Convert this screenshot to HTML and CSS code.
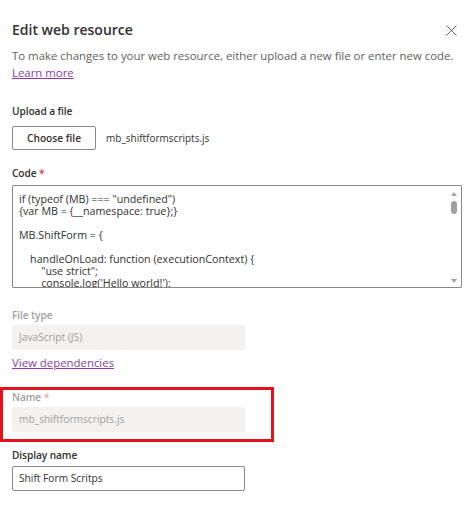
FILE: index.html
```html
<!DOCTYPE html>
<html lang="en">
<head>
  <meta charset="UTF-8" />
  <meta name="viewport" content="width=device-width, initial-scale=1" />
  <title>Edit web resource</title>
  <link rel="stylesheet" href="styles.css">
</head>
<body>
  <div class="panel">
    <div class="panel-header">
      <h1 class="panel-title">Edit web resource</h1>
      <button class="close-btn" aria-label="Close">
        <svg width="11" height="11" viewBox="0 0 11 11">
          <path d="M0.5 0.5 L10.5 10.5 M10.5 0.5 L0.5 10.5" stroke="#605e5c" stroke-width="1" fill="none" />
        </svg>
      </button>
    </div>
    <p class="intro">To make changes to your web resource, either upload a new file or enter new code.<br><a href="#" class="link">Learn more</a></p>

    <div class="field field-upload">
      <div class="label">Upload a file</div>
      <div class="upload-row">
        <button class="btn">Choose file</button>
        <span class="file-name">mb_shiftformscripts.js</span>
      </div>
    </div>

    <div class="field field-code">
      <div class="label">Code <span class="req">*</span></div>
      <div class="code-box">
<pre class="code-text">if (typeof (MB) === "undefined")
{var MB = {__namespace: true};}

MB.ShiftForm = {

    handleOnLoad: function (executionContext) {
        "use strict";
        console.log('Hello world!');
    }
};</pre>
        <div class="scrollbar">
          <span class="arrow arrow-up"></span>
          <span class="thumb"></span>
          <span class="track"></span>
          <span class="arrow arrow-down"></span>
        </div>
      </div>
    </div>

    <div class="field field-type">
      <div class="label label-disabled">File type</div>
      <div class="input input-disabled">JavaScript (JS)</div>
      <a href="#" class="link link-deps">View dependencies</a>
    </div>

    <div class="highlight">
      <div class="label label-disabled label-tight">Name <span class="req req-disabled">*</span></div>
      <div class="input input-disabled">mb_shiftformscripts.js</div>
    </div>

    <div class="field field-display">
      <div class="label">Display name</div>
      <div class="input">Shift Form Scritps</div>
    </div>
  </div>
</body>
</html>
```

FILE: styles.css
```css
body {
  margin: 0;
  padding: 0;
  font-family: 'Open Sans', 'Noto Sans', sans-serif;
  background-color: #fff;
  color: #323130;
}

.panel {
  padding: 0 12px;
}

.panel-header {
  display: flex;
  align-items: center;
  justify-content: space-between;
  margin-top: 18px;
  height: 24px;
}
.panel-title {
  margin: 0;
  font-size: 14px;
  font-weight: 600;
  line-height: 24px;
  color: #323130;
}
.close-btn {
  border: none;
  background: none;
  padding: 0;
  margin-right: 5px;
  width: 11px;
  height: 11px;
  display: flex;
}

.intro {
  margin: 5px 0 0;
  font-size: 11.4px;
  line-height: 17px;
  color: #605e5c;
}
.link {
  color: #8a3d9e;
  text-decoration: underline;
}

.label {
  font-size: 10.2px;
  font-weight: 600;
  letter-spacing: -0.1px;
  line-height: 20px;
  color: #323130;
}
.label-disabled {
  color: #a19f9d;
}
.req {
  color: #d13438;
}
.req-disabled {
  color: #e8a3a5;
}

.field-upload {
  margin-top: 20px;
}
.upload-row {
  display: flex;
  align-items: center;
  gap: 10px;
  margin-top: 5px;
}
.btn {
  width: 84px;
  height: 24px;
  padding: 0;
  border: 1px solid #8a8886;
  border-radius: 2px;
  background: #fff;
  font-family: inherit;
  font-size: 10.2px;
  font-weight: 600;
  color: #323130;
}
.file-name {
  font-size: 10px;
  color: #323130;
}

.field-code {
  margin-top: 13px;
}
.code-box {
  display: flex;
  height: 101px;
  margin-top: 2px;
  border: 1px solid #8a8886;
  border-radius: 1px;
  overflow: hidden;
}
.code-text {
  flex: 1;
  margin: 0;
  padding: 7px 6px 0;
  font-family: 'Open Sans', 'Noto Sans', sans-serif;
  font-size: 10.7px;
  line-height: 12px;
  color: #323130;
  white-space: pre;
  overflow: hidden;
}
.scrollbar {
  width: 12px;
  display: flex;
  flex-direction: column;
  align-items: center;
  padding: 6px 0 4px;
  margin-right: 1px;
}
.arrow {
  width: 0;
  height: 0;
  border-left: 3px solid transparent;
  border-right: 3px solid transparent;
}
.arrow-up {
  border-bottom: 4px solid #a3a3a3;
}
.arrow-down {
  border-top: 4px solid #a3a3a3;
}
.thumb {
  width: 6px;
  height: 13px;
  margin-top: 5px;
  border-radius: 3px;
  background: #a0a0a0;
}
.track {
  flex: 1;
}

.field-type {
  margin-top: 17px;
}
.input {
  box-sizing: border-box;
  width: 233px;
  height: 25px;
  padding: 0 6px;
  border: 1px solid #8a8886;
  border-radius: 2px;
  font-size: 10.2px;
  line-height: 23px;
  color: #323130;
}
.input-disabled {
  border-color: #f3f2f1;
  background: #f3f2f1;
  color: #a19f9d;
}
.link-deps {
  display: inline-block;
  margin-top: 2px;
  font-size: 11.4px;
  line-height: 22px;
}

.highlight {
  width: 249px;
  margin: 13px 0 0 -12px;
  padding: 0 10px 7px 9px;
  border: 3px solid #e3121c;
}
.label-tight {
  line-height: 15px;
}
.highlight .input {
  margin-top: 2px;
}

.field-display {
  margin-top: 3px;
}
.field-display .input {
  margin-top: 1px;
}
```
